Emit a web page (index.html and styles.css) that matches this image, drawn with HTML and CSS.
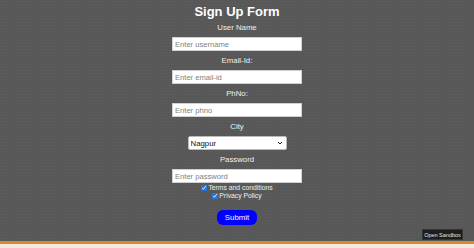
FILE: index.html
```html
<!DOCTYPE html>
<html>
<head>
<meta charset="utf-8">
<link rel="stylesheet" href="styles.css">
</head>
<body>
<div class="stage">
  <form class="form">
    <h1 class="title">Sign Up Form</h1>
    <label class="lbl">User Name</label>
    <input class="field" type="text" placeholder="Enter username">
    <label class="lbl">Email-Id:</label>
    <input class="field" type="text" placeholder="Enter email-id">
    <label class="lbl">PhNo:</label>
    <input class="field" type="text" placeholder="Enter phno">
    <label class="lbl">City</label>
    <select class="city"><option>Nagpur</option></select>
    <label class="lbl">Password</label>
    <input class="field" type="password" placeholder="Enter password">
    <div class="checks">
      <label class="chk"><input type="checkbox" checked>Terms and conditions</label>
      <label class="chk"><input type="checkbox" checked>Privacy Policy</label>
    </div>
    <button class="submit" type="button">Submit</button>
  </form>
  <div class="sandbox">Open Sandbox</div>
</div>
<div class="bar"></div>
<div class="foot"></div>
</body>
</html>
```
FILE: styles.css
```css
html, body {
  margin: 0;
  padding: 0;
}
body {
  width: 474px;
  height: 248px;
  overflow: hidden;
  font-family: "Liberation Sans", Arial, sans-serif;
  display: flex;
  flex-direction: column;
  background: #f1ebe4;
}
.stage {
  position: relative;
  height: 241px;
  background-color: #585858;
  background-image: radial-gradient(rgba(255,255,255,0.035) 0.6px, transparent 0.8px);
  background-size: 3px 3px;
}
.form {
  display: flex;
  flex-direction: column;
  align-items: center;
  margin: 0;
}
.title {
  margin: 0;
  padding-top: 2px;
  height: 16px;
  line-height: 20px;
  font-size: 13px;
  font-weight: bold;
  color: #ffffff;
}
.lbl {
  margin-top: 4px;
  line-height: 12px;
  font-size: 7.8px;
  color: #f0f0f0;
}
.field {
  margin: 3px 0 0 0;
  box-sizing: border-box;
  width: 130px;
  height: 14px;
  padding: 0 2px;
  border: 1px solid #d0d0d0;
  border-radius: 0;
  background: #ffffff;
  font-family: "Liberation Sans", Arial, sans-serif;
  font-size: 7.6px;
  color: #222;
  outline: none;
}
.field::placeholder {
  color: #808080;
}
.city {
  margin: 3px 0 0 0;
  box-sizing: border-box;
  width: 99px;
  height: 14px;
  padding: 0 2px;
  border: 1px solid #bbb;
  border-radius: 2px;
  -webkit-appearance: none;
  appearance: none;
  background: #fff url("data:image/svg+xml,%3Csvg xmlns='http://www.w3.org/2000/svg' width='6' height='4' viewBox='0 0 6 4'%3E%3Cpath d='M1 1l2 2 2-2' fill='none' stroke='%23222' stroke-width='1'/%3E%3C/svg%3E") no-repeat right 3px center;
  font-family: "Liberation Sans", Arial, sans-serif;
  font-size: 7.8px;
  color: #111;
}
.checks {
  margin-top: 1px;
  display: flex;
  flex-direction: column;
  align-items: center;
}
.chk {
  display: flex;
  align-items: center;
  line-height: 8px;
  height: 8px;
  font-size: 6.8px;
  color: #f0f0f0;
}
.chk input {
  margin: 0 1px 0 0;
  width: 6px;
  height: 6px;
  accent-color: #1a73e8;
}
.submit {
  margin-top: 10px;
  width: 40px;
  height: 15px;
  padding: 0;
  border: none;
  border-radius: 6px;
  background: #0000ff;
  color: #ffffff;
  font-family: "Liberation Sans", Arial, sans-serif;
  font-size: 7.8px;
}
.sandbox {
  position: absolute;
  right: 11px;
  bottom: 1px;
  width: 41px;
  height: 11px;
  box-sizing: border-box;
  background: #1e1e1e;
  border: 1px solid #333;
  color: #e6e6e6;
  font-size: 5.5px;
  display: flex;
  align-items: center;
  justify-content: center;
}
.bar {
  height: 3px;
  background: #d88a2c;
}
.foot {
  flex: 1;
  background: #f1ebe4;
}
```
